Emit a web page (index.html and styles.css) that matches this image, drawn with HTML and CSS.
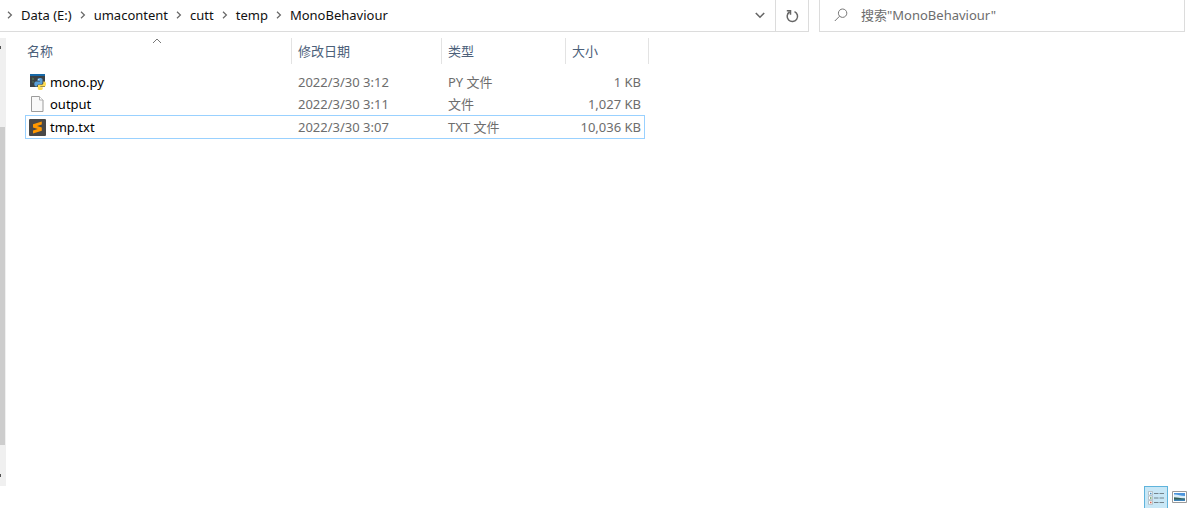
FILE: index.html
```html
<!DOCTYPE html>
<html lang="zh-CN">
<head>
<meta charset="utf-8">
<title>MonoBehaviour</title>
<link rel="stylesheet" href="styles.css">
</head>
<body>
<div class="window">
  <header class="toolbar">
    <div class="address">
      <nav class="crumbs" aria-label="路径">
        <svg class="sep" viewBox="0 0 6 8"><path d="M1 .8 4.4 4 1 7.2"/></svg>
        <a href="#">Data (E:)</a>
        <svg class="sep" viewBox="0 0 6 8"><path d="M1 .8 4.4 4 1 7.2"/></svg>
        <a href="#">umacontent</a>
        <svg class="sep" viewBox="0 0 6 8"><path d="M1 .8 4.4 4 1 7.2"/></svg>
        <a href="#">cutt</a>
        <svg class="sep" viewBox="0 0 6 8"><path d="M1 .8 4.4 4 1 7.2"/></svg>
        <a href="#">temp</a>
        <svg class="sep" viewBox="0 0 6 8"><path d="M1 .8 4.4 4 1 7.2"/></svg>
        <a href="#">MonoBehaviour</a>
      </nav>
      <button class="history" type="button" aria-label="以前的位置"><svg width="10" height="7" viewBox="0 0 10 7"><path d="M.8 1 5 5.2 9.2 1"/></svg></button>
      <button class="refresh" type="button" aria-label="刷新"><svg width="14" height="14" viewBox="0 0 14 14"><path d="M9.500 2.600A5.200 5.200 0 1 1 4.500 3M1.800 1.800h3.700v3.900"/></svg></button>
    </div>
    <label class="search">
      <svg width="14" height="14" viewBox="0 0 14 14"><circle cx="8.600" cy="5.200" r="4.200"/><path d="M5.600 8.200.8 13"/></svg>
      <input type="text" aria-label="搜索" placeholder='搜索"MonoBehaviour"'>
    </label>
  </header>
  <main class="content">
    <div class="scrollbar"><span class="mark"></span><span class="thumb"></span><span class="mark"></span></div>
    <table class="files">
      <thead>
        <tr>
          <th>名称<svg class="sort" width="10" height="6" viewBox="0 0 10 6"><path d="M1 5 5 1l4 4"/></svg></th>
          <th>修改日期</th><th>类型</th><th>大小</th>
        </tr>
      </thead>
      <tbody>
        <tr>
          <td class="name"><svg class="icon" viewBox="0 0 17 17"><path fill="#3c4144" d="M1 0h15v13H1z"/><path fill="#1769a8" d="M1 0h15v2H1z"/><path d="m3 4 2 1-2 1M3 8h2" fill="none" stroke="#4e7456"/><path fill="#5a9fd6" d="M8.500 5.500C8.500 4.500 9.700 4 11 4s2.500.5 2.500 1.500V9c0 .9-.6 1.400-1.400 1.400H9.500c-1 0-1.500.7-1.500 2.100H7c-1.200 0-1.700-1-1.700-2.500S5.900 7.600 7 7.600h4V7H8.500z"/><path fill="#ffdd55" d="M14.300 7.500h1c1.100 0 1.700 1 1.700 2.500s-.6 2.600-1.700 2.600h-4v.6h2.500v1.300c0 1-1.200 1.500-2.500 1.500s-2.500-.5-2.500-1.500v-2.300c0-.9.600-1.400 1.400-1.400h2.600c.9 0 1.500-.7 1.500-1.700z"/><circle cx="9.800" cy="5.500" r=".6" fill="#fff"/></svg>mono.py</td>
          <td>2022/3/30 3:12</td><td>PY 文件</td><td>1 KB</td>
        </tr>
        <tr>
          <td class="name"><svg class="icon" viewBox="0 0 17 17"><path fill="#f9f9f9" stroke="#9c9c9c" d="M2.500.500h8l3.500 3.500v11.500H2.500z"/><path fill="#fff" stroke="#b0b0b0" d="M10.500.500V4H14"/></svg>output</td>
          <td>2022/3/30 3:11</td><td>文件</td><td>1,027 KB</td>
        </tr>
        <tr class="focused">
          <td class="name"><svg class="icon" viewBox="0 0 17 17"><rect width="17" height="17" rx="1" fill="#484848"/><path fill="#ff9800" d="M4 5.300 12.800 2.500v3L8 7l4.800 1.500v3.200L4 14.500v-3L8.800 10 4 8.500z"/></svg>tmp.txt</td>
          <td>2022/3/30 3:07</td><td>TXT 文件</td><td>10,036 KB</td>
        </tr>
      </tbody>
    </table>
  </main>
  <footer class="views">
    <button class="view active" type="button" aria-label="详细信息"><svg width="17" height="14" viewBox="0 0 17 14"><path fill="#fff" stroke="#a5adb2" stroke-width=".7" d="M.5.500h4v3.600h-4zM.5 5.100h4v3.600h-4zM.5 9.700h4v3.600h-4z"/><path stroke="#75848c" d="M6 2.500h4.500m1 0H16M6 7h4.500m1 0H16M6 11.500h4.500m1 0H16"/><path fill="#4b8fc4" d="M2 1.700h1.500v1.500H2z"/><path fill="#5c9b5f" d="M2 6.300h1.500v1.500H2z"/><path fill="#d5604c" d="M2 10.800h1.500v1.500H2z"/></svg></button>
    <button class="view" type="button" aria-label="大缩略图"><svg width="15" height="12" viewBox="0 0 15 12"><path fill="#fff" stroke="#9a9a9a" d="M.5.500h14v11H.5z"/><path fill="#4b94dc" d="M2 2h11v8H2z"/><path fill="#d9edf8" d="M2 3.500c3-.5 6 1.500 11 1.500v2.500H2z"/><path fill="#356057" d="M2 6.200c3 0 6 1.200 11 1.300V9H2z"/><path fill="#3f84b8" d="M2 8.500h11V10H2z"/></svg></button>
  </footer>
</div>
</body>
</html>
```
FILE: styles.css
```css
* { box-sizing: border-box; }
body {
  margin: 0;
  background: #fff;
  color: #111;
  font: 13px/22px "Noto Sans", "Noto Sans CJK SC", sans-serif;
}
button { border: 0; padding: 0; background: none; display: grid; place-items: center; }
svg { display: block; flex: none; fill: none; }
.window { min-height: 100vh; display: flex; flex-direction: column; }
.toolbar { display: grid; grid-template-columns: 809fr 366fr; gap: 10px; height: 32px; padding-right: 7px; }
.address { display: flex; border: solid #dcdcdc; border-width: 0 1px 1px 0; }
.crumbs { flex: 1; display: flex; align-items: center; gap: 8px; padding: 0 0 2px 7px; }
.crumbs a { color: inherit; text-decoration: none; white-space: nowrap; }
.sep { width: 6px; height: 8px; stroke: #666; stroke-width: 1.2; }
.history { width: 30px; stroke: #666; stroke-width: 1.6; }
.refresh { width: 33px; border-left: 1px solid #dcdcdc; stroke: #666; stroke-width: 1.5; }
.search {
  display: flex;
  align-items: center;
  gap: 13px;
  padding: 0 0 2px 14px;
  border: solid #dcdcdc;
  border-width: 0 1px 1px;
  stroke: #777;
}
.search input { flex: 1; min-width: 0; border: 0; padding: 0; outline: 0; font: inherit; background: none; }
.search input::placeholder { color: #6d6d6d; opacity: 1; }
.content { flex: 1; display: flex; gap: 19px; padding-top: 6px; }
.scrollbar {
  width: 6px;
  display: grid;
  grid-template-rows: 89fr 318fr 41fr;
  background: #f0f0f0;
}
.thumb { width: 5px; background: #cdcdcd; }
.mark { width: 1px; height: 3px; margin-top: 8px; background: #555; }
.mark:last-child { align-self: end; margin-bottom: 9px; }
.files, .files thead, .files tbody { display: block; }
.files tbody { width: 620px; }
.files tr { display: grid; grid-template-columns: 267px 150px 124px 79px; height: 22px; }
.files tbody tr:last-child { height: 24px; }
.files thead tr { grid-template-columns: 267px 150px 124px 83px; height: 26px; margin-bottom: 7px; }
th {
  position: relative;
  padding: 2px 0 0 6px;
  border-right: 1px solid #e3e3e3;
  color: #4c607a;
  font-weight: 400;
  text-align: left;
}
th:first-child { padding-left: 2px; }
.sort { position: absolute; top: 0; left: 127px; stroke: #777; }
td { padding: 0 0 0 6px; color: #6d6d6d; white-space: nowrap; }
td:last-child { padding-right: 4px; text-align: right; }
.name { display: flex; align-items: center; gap: 4px; padding-left: 4px; color: #000; }
.icon { width: 17px; height: 17px; }
.focused { align-items: center; outline: 1px solid #99d1ff; outline-offset: -1px; }
.views { display: flex; justify-content: flex-end; gap: 4px; padding-right: 5px; }
.view { height: 22px; }
.active { width: 24px; background: #c8e7f6; border: 1px solid #5fb4dc; border-bottom: 0; }
```
